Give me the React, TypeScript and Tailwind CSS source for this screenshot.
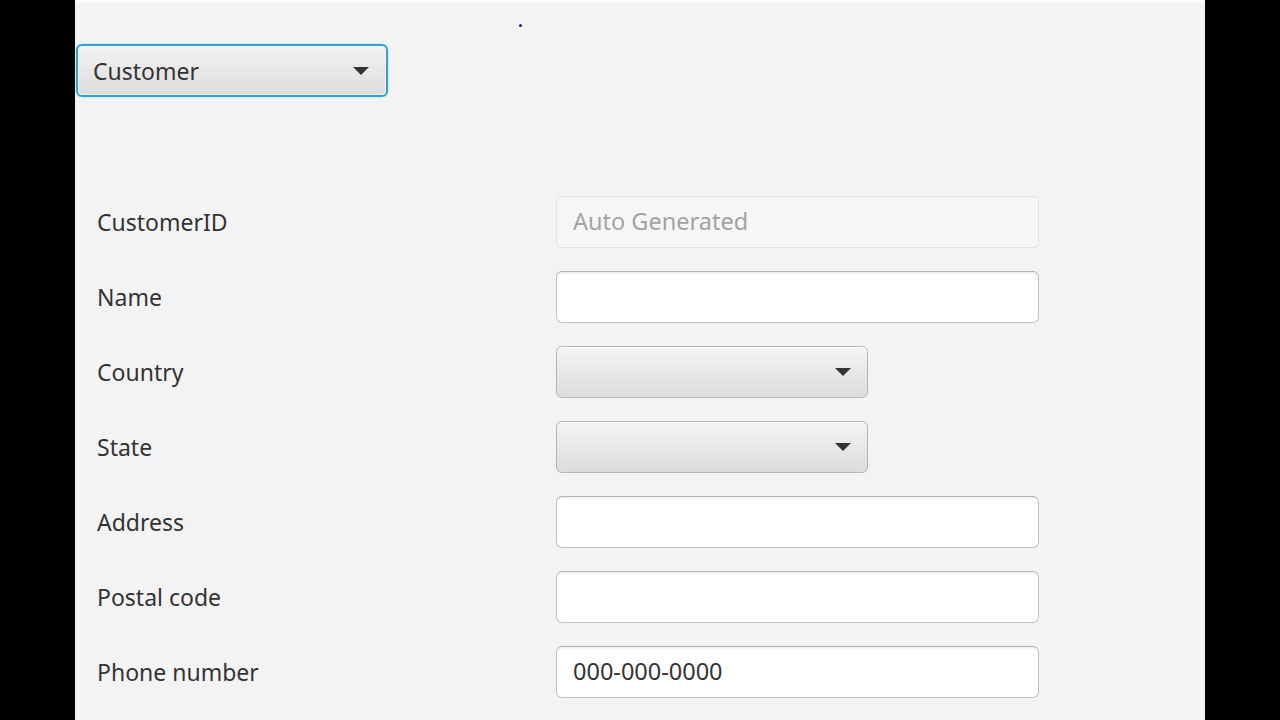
import React from 'react';

const fontStack = { fontFamily: '"Noto Sans", "Open Sans", sans-serif' };

const Arrow = () => (
  <svg width="16" height="8" viewBox="0 0 16 8" className="shrink-0">
    <path d="M0 0 H16 L8 8 Z" fill="#333333" />
  </svg>
);

const TextField = ({ value = '', disabled = false }: { value?: string; disabled?: boolean }) => (
  <div
    className={
      disabled
        ? 'w-[483px] h-[52px] rounded-[6px] border border-[#e2e2e2] bg-[#f6f6f6] flex items-center pl-[16px] text-[23.5px] text-[#a3a3a3]'
        : 'w-[483px] h-[52px] rounded-[6px] border border-[#c2c2c2] border-t-[#b3b3b3] bg-white shadow-[inset_0_3px_3px_-2px_rgba(0,0,0,0.1)] flex items-center pl-[16px] text-[23.5px] text-[#333333]'
    }
  >
    {value}
  </div>
);

const Combo = () => (
  <div className="w-[312px] h-[52px] rounded-[6px] border border-[#b5b5b5] bg-gradient-to-b from-[#f4f4f4] to-[#dcdcdc] shadow-[inset_0_1px_0_#ffffff] flex items-center justify-end pr-[16px]">
    <Arrow />
  </div>
);

const rows: { label: string; field: React.ReactNode }[] = [
  { label: 'CustomerID', field: <TextField value="Auto Generated" disabled /> },
  { label: 'Name', field: <TextField /> },
  { label: 'Country', field: <Combo /> },
  { label: 'State', field: <Combo /> },
  { label: 'Address', field: <TextField /> },
  { label: 'Postal code', field: <TextField /> },
  { label: 'Phone number', field: <TextField value="000-000-0000" /> },
];

export default function App() {
  return (
    <div className="w-[1280px] h-[720px] bg-black flex overflow-hidden" style={fontStack}>
      <div className="ml-[75px] w-[1130px] h-full bg-[#f3f3f3] border-t-[3px] border-[#fbfbfb] relative">
        {/* stray dot */}
        <div className="absolute left-[444px] top-[21px] w-[3px] h-[3px] rounded-full bg-[#1a1aa0]" />

        {/* type selector */}
        <div className="ml-[1px] mt-[41px] w-[312px] h-[53px] rounded-[6px] border-2 border-[#2ea3d1] p-px shadow-[0_0_2px_#8fd3ee]">
          <div className="w-full h-full rounded-[4px] bg-gradient-to-b from-[#f2f2f2] to-[#dedede] flex items-center justify-between pl-[14px] pr-[16px]">
            <span className="text-[23px] text-[#333333] pt-px">Customer</span>
            <Arrow />
          </div>
        </div>

        {/* form */}
        <div className="mt-[99px] flex flex-col gap-[23px]">
          {rows.map((r) => (
            <div key={r.label} className="flex items-center h-[52px]">
              <div className="w-[481px] pl-[22px] pt-px text-[23px] text-[#333333]">{r.label}</div>
              {r.field}
            </div>
          ))}
        </div>
      </div>
    </div>
  );
}
